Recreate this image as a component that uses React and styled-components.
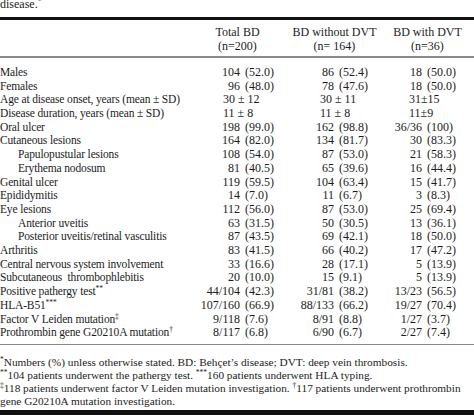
import React from 'react';
import styled, { createGlobalStyle } from 'styled-components';

const GlobalStyle = createGlobalStyle`
  html, body {
    margin: 0;
    padding: 0;
    background: #ffffff;
  }
  body {
    font-family: "Liberation Serif", "Times New Roman", serif;
    color: #1c1c1c;
    overflow: hidden;
  }
`;

const Page = styled.div`
  width: 474px;
  height: 415px;
  overflow: hidden;
  display: flex;
  flex-direction: column;
`;

const Caption = styled.div`
  height: 19px;
  margin-top: -2px;
  font-size: 12px;
  line-height: 12px;
  white-space: nowrap;
`;

const ThickRule = styled.div`
  height: ${(p) => p.$size || 3}px;
  background: #111;
`;

const ThinRule = styled.div`
  height: 1.5px;
  background: #8a8a8a;
`;

const COLS = '195px 45px 50px 44px 51px 37px 1fr';

const Header = styled.div`
  display: grid;
  grid-template-columns: ${COLS};
  padding: 6px 0 3px;
  font-size: 12px;
  line-height: 13.7px;
`;

const HeadCell = styled.div`
  grid-column: ${(p) => p.$col} / span 2;
  text-align: center;
  padding-right: ${(p) => p.$shift || 0}px;
  white-space: nowrap;
`;

const Body = styled.div`
  padding: 8px 0 4px;
  font-size: 12px;
  line-height: 13.7px;
`;

const Row = styled.div`
  display: grid;
  grid-template-columns: ${COLS};
  white-space: nowrap;
`;

const Label = styled.div`
  padding-left: ${(p) => (p.$indent ? 18 : 0)}px;
  font-size: 11.5px;
  letter-spacing: -0.15px;
`;

const Count = styled.div`
  text-align: right;
`;

const Pct = styled.div`
  padding-left: 5px;
`;

const Mean = styled.div`
  grid-column: span 2;
  padding-left: ${(p) => p.$pad}px;
`;

const Sup = styled.sup`
  font-size: 7.5px;
  line-height: 0;
  vertical-align: 4px;
  letter-spacing: 0;
`;

const Notes = styled.div`
  padding-top: 11px;
  font-size: 11.3px;
  line-height: 12.7px;
  white-space: nowrap;
  flex: 1;
`;

const MEAN_PAD = [28, 30, 24];

const rows = [
  { label: 'Males', v: [['104', '(52.0)'], ['86', '(52.4)'], ['18', '(50.0)']] },
  { label: 'Females', v: [['96', '(48.0)'], ['78', '(47.6)'], ['18', '(50.0)']] },
  { label: 'Age at disease onset, years (mean ± SD)', mean: ['30 ± 12', '30 ± 11', '31±15'] },
  { label: 'Disease duration, years (mean ± SD)', mean: ['11 ± 8', '11 ± 8', '11±9'] },
  { label: 'Oral ulcer', v: [['198', '(99.0)'], ['162', '(98.8)'], ['36/36', '(100)']] },
  { label: 'Cutaneous lesions', v: [['164', '(82.0)'], ['134', '(81.7)'], ['30', '(83.3)']] },
  { label: 'Papulopustular lesions', indent: true, v: [['108', '(54.0)'], ['87', '(53.0)'], ['21', '(58.3)']] },
  { label: 'Erythema nodosum', indent: true, v: [['81', '(40.5)'], ['65', '(39.6)'], ['16', '(44.4)']] },
  { label: 'Genital ulcer', v: [['119', '(59.5)'], ['104', '(63.4)'], ['15', '(41.7)']] },
  { label: 'Epididymitis', v: [['14', '(7.0)'], ['11', '(6.7)'], ['3', '(8.3)']] },
  { label: 'Eye lesions', v: [['112', '(56.0)'], ['87', '(53.0)'], ['25', '(69.4)']] },
  { label: 'Anterior uveitis', indent: true, v: [['63', '(31.5)'], ['50', '(30.5)'], ['13', '(36.1)']] },
  { label: 'Posterior uveitis/retinal vasculitis', indent: true, v: [['87', '(43.5)'], ['69', '(42.1)'], ['18', '(50.0)']] },
  { label: 'Arthritis', v: [['83', '(41.5)'], ['66', '(40.2)'], ['17', '(47.2)']] },
  { label: 'Central nervous system involvement', v: [['33', '(16.6)'], ['28', '(17.1)'], ['5', '(13.9)']] },
  { label: 'Subcutaneous\u00a0 thrombophlebitis', v: [['20', '(10.0)'], ['15', '(9.1)'], ['5', '(13.9)']] },
  { label: 'Positive pathergy test', sup: '**', v: [['44/104', '(42.3)'], ['31/81', '(38.2)'], ['13/23', '(56.5)']] },
  { label: 'HLA-B51', sup: '***', v: [['107/160', '(66.9)'], ['88/133', '(66.2)'], ['19/27', '(70.4)']] },
  { label: 'Factor V Leiden mutation', sup: '‡', v: [['9/118', '(7.6)'], ['8/91', '(8.8)'], ['1/27', '(3.7)']] },
  { label: 'Prothrombin gene G20210A mutation', sup: '†', v: [['8/117', '(6.8)'], ['6/90', '(6.7)'], ['2/27', '(7.4)']] },
];

export default function App() {
  return (
    <>
      <GlobalStyle />
      <Page>
        <Caption>
          disease.<Sup>*</Sup>
        </Caption>
        <ThickRule $size={3} />
        <Header>
          <HeadCell $col={2} $shift={10}>Total BD<br />(n=200)</HeadCell>
          <HeadCell $col={4} $shift={6}>BD without DVT<br />(n= 164)</HeadCell>
          <HeadCell $col={6} $shift={4}>BD with DVT<br />(n=36)</HeadCell>
        </Header>
        <ThinRule />
        <Body>
          {rows.map((r) => (
            <Row key={r.label}>
              <Label $indent={r.indent}>
                {r.label}
                {r.sup && <Sup>{r.sup}</Sup>}
              </Label>
              {r.mean
                ? r.mean.map((m, i) => (
                    <Mean key={i} $pad={MEAN_PAD[i]}>{m}</Mean>
                  ))
                : r.v.map(([c, p], i) => (
                    <React.Fragment key={i}>
                      <Count>{c}</Count>
                      <Pct>{p}</Pct>
                    </React.Fragment>
                  ))}
            </Row>
          ))}
        </Body>
        <ThinRule />
        <Notes>
          <div><Sup>*</Sup>Numbers (%) unless otherwise stated. BD: Behçet’s disease; DVT: deep vein thrombosis.</div>
          <div><Sup>**</Sup>104 patients underwent the pathergy test. <Sup>***</Sup>160 patients underwent HLA typing.</div>
          <div><Sup>‡</Sup>118 patients underwent factor V Leiden mutation investigation. <Sup>†</Sup>117 patients underwent prothrombin</div>
          <div>gene G20210A mutation investigation.</div>
        </Notes>
        <ThickRule $size={5} />
      </Page>
    </>
  );
}
